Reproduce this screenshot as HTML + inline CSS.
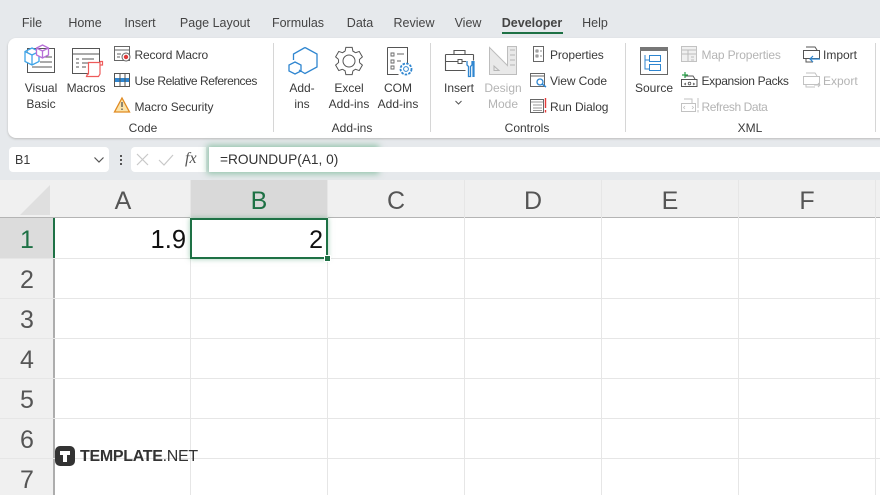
<!DOCTYPE html>
<html><head><meta charset="utf-8"><style>
html,body{margin:0;padding:0}
body{width:880px;height:495px;overflow:hidden;background:#fff;position:relative;font-family:"Liberation Sans",sans-serif;color:#333}
.a{position:absolute}
.t{position:absolute;white-space:nowrap;font-size:12px;line-height:16px;color:#3a3a3a}
.c{transform:translateX(-50%);text-align:center}
.d{color:#b4b4b4}
.tab{position:absolute;top:15px;font-size:12.5px;line-height:16px;color:#444;white-space:nowrap;transform:translateX(-50%)}
.h{position:absolute;top:186px;font-size:25px;line-height:30px;color:#555;transform:translateX(-50%)}
.r{position:absolute;left:27px;font-size:25px;line-height:30px;color:#555;transform:translateX(-50%)}
</style></head><body>
<div class="a" style="left:0;top:0;width:880px;height:180px;background:#e6e9ec"></div>
<div class="a" style="left:8px;top:38px;width:880px;height:100px;background:#fff;border-radius:8px;box-shadow:0 1px 2px #bbb"></div>

<span class="tab" style="left:32px">File</span>
<span class="tab" style="left:85px">Home</span>
<span class="tab" style="left:140px">Insert</span>
<span class="tab" style="left:215px">Page Layout</span>
<span class="tab" style="left:298px">Formulas</span>
<span class="tab" style="left:360px">Data</span>
<span class="tab" style="left:414px">Review</span>
<span class="tab" style="left:468px">View</span>
<span class="tab" style="left:532px;font-weight:bold;font-size:12.5px;color:#444">Developer</span>
<span class="tab" style="left:595px">Help</span>
<div class="a" style="left:502px;top:32px;width:61px;height:2px;background:#1e7145"></div>

<div class="a" style="left:273px;top:43px;width:1px;height:89px;background:#d6d6d6"></div>
<div class="a" style="left:430px;top:43px;width:1px;height:89px;background:#d6d6d6"></div>
<div class="a" style="left:625px;top:43px;width:1px;height:89px;background:#d6d6d6"></div>
<div class="a" style="left:875px;top:43px;width:1px;height:89px;background:#d6d6d6"></div>

<svg class="a" style="left:0;top:0" width="880" height="140" fill="none" stroke-width="1">
<!-- Visual Basic -->
<g stroke="#555"><rect x="27.500" y="48.500" width="27" height="24" fill="#fff"/><path d="M40 57h12M40 62h12M32 67h20"/></g>
<path d="M32 48l7 3.500v10l-7 3.500-7-3.500v-10zM25 51.500l7 3.500 7-3.500M32 55v10" stroke="#3fa4e8" fill="#fff" stroke-width="1.300"/>
<path d="M42.500 45l6 3v7l-6 3-6-3v-7zM36.500 48l6 3 6-3M42.500 51v7" stroke="#b76fd8" fill="#fff" stroke-width="1.300"/>
<!-- Macros -->
<g stroke="#555"><rect x="72.500" y="48.500" width="27" height="25" fill="#fff"/><path d="M73 54h26M76 59h3M82 59h12M76 63h3M82 63h6M76 67h3M82 67h4"/></g>
<path d="M88.500 62.500h11.500v11.500l-1.500 2.500h-12l1-2.500h1zM100 61.500h2.500v3.500h-2.500" stroke="#ee5a5a" fill="#fff" stroke-width="1.200"/>
<!-- Record Macro -->
<rect x="114.500" y="46.500" width="15" height="14" stroke="#666" fill="#fff"/><path d="M115 50h14M117 54h4M117 57h3" stroke="#666"/>
<circle cx="126" cy="57" r="4" fill="#fff" stroke="#666"/><circle cx="126" cy="57" r="2.200" fill="#e03a3a"/>
<!-- Relative refs -->
<rect x="114.500" y="73.500" width="15" height="13" fill="#fff" stroke="#555"/><rect x="115" y="78" width="14" height="4" fill="#2f86d0"/><path d="M120 74v12M125 74v12" stroke="#555"/>
<!-- Security -->
<path d="M122 98l7.500 14h-15z" fill="#fbe3a8" stroke="#e08a22" stroke-width="1.300"/><path d="M122 102v5M122 108.500v1.500" stroke="#555" stroke-width="1.300"/>
<!-- Add-ins -->
<path d="M305 47.500l12 6.500v13l-12 6.500-6-3.500M293.500 60v-6l11.500-6.500" stroke="#2f86d0" stroke-width="1.300"/>
<path d="M295 62l6 3v6l-6 3-6-3v-6z" stroke="#2f86d0" stroke-width="1.300"/>
<!-- Excel add-ins gear -->
<g transform="translate(349 61)" stroke="#555">
<path d="M-3.930-9.740L-3.150-13.640L3.150-13.640L3.930-9.740A10.500 10.500 0 0 1 6.460-8.270"/>
<path transform="rotate(60)" d="M-3.930-9.740L-3.150-13.640L3.150-13.640L3.930-9.740A10.500 10.500 0 0 1 6.460-8.270"/>
<path transform="rotate(120)" d="M-3.930-9.740L-3.150-13.640L3.150-13.640L3.930-9.740A10.500 10.500 0 0 1 6.460-8.270"/>
<path transform="rotate(180)" d="M-3.930-9.740L-3.150-13.640L3.150-13.640L3.930-9.740A10.500 10.500 0 0 1 6.460-8.270"/>
<path transform="rotate(240)" d="M-3.930-9.740L-3.150-13.640L3.150-13.640L3.930-9.740A10.500 10.500 0 0 1 6.460-8.270"/>
<path transform="rotate(300)" d="M-3.930-9.740L-3.150-13.640L3.150-13.640L3.930-9.740A10.500 10.500 0 0 1 6.460-8.270"/>
<circle r="6"/></g>
<!-- COM -->
<path d="M387.500 47.500h20v16M387.500 47.500v27h11" stroke="#555"/><path d="M391 53h3v3h-3zM391 60h3v3h-3zM391 66h3v3h-3zM397 54h7M397 61h4" stroke="#666" stroke-width=".9"/>
<circle cx="406" cy="69" r="5.500" stroke="#2f86d0" stroke-width="1.800" stroke-dasharray="2.500 1.200"/><circle cx="406" cy="69" r="2.400" stroke="#2f86d0"/>
<!-- Insert -->
<path d="M445.500 54.500h28M445.500 54.500v16h20M473.500 54.500v6M446 61.500h20M454 54v-3.500h11v3.500" stroke="#555" stroke-width="1.100"/><rect x="458" y="59.500" width="4" height="4" stroke="#555" fill="#fff"/>
<path d="M467 61v4l1.500 1.500v10h2v-10l1.500-1.500v-4" stroke="#2f86d0" stroke-width="1.300"/><path d="M473.500 61v16" stroke="#2f86d0" stroke-width="2.200"/>
<!-- Design mode -->
<path d="M489.500 47.500v27h27v-28h-9v19z" stroke="#bdbdbd" fill="#e9e9e9"/><path d="M494 66v4.500h5zM510 50h5M510 55h5M510 60h5M510 65h5" stroke="#b5b5b5"/>
<!-- Properties -->
<rect x="533.500" y="46.500" width="10" height="15" stroke="#666"/><path d="M536 50h2v2h-2zM536 55h2v2h-2zM540 51h2M540 56h2" stroke="#666" stroke-width=".8"/>
<!-- View code -->
<rect x="530.500" y="73.500" width="14" height="13" stroke="#666"/><path d="M531 76h14" stroke="#666"/><circle cx="540" cy="82" r="3" stroke="#2f86d0" stroke-width="1.300"/><path d="M542 84l4 3" stroke="#2f86d0" stroke-width="1.500"/>
<!-- Run dialog -->
<rect x="530.500" y="99.500" width="13" height="13" stroke="#666"/><path d="M531 102h13M533 105h9M533 108h9M533 110.500h9" stroke="#777" stroke-width=".8"/><path d="M545.500 98v10M545.500 110v2.500" stroke="#e63a3a" stroke-width="1.400"/>
<!-- Source -->
<rect x="640.500" y="47.500" width="27" height="27" stroke="#666" fill="#fff"/><rect x="640" y="47" width="28" height="4" fill="#777"/>
<path d="M645 55v14h4M645 60h4" stroke="#2f86d0"/><rect x="649.500" y="55.500" width="11" height="6" stroke="#2f86d0"/><rect x="649.500" y="64.500" width="11" height="6" stroke="#2f86d0"/>
<!-- Map props -->
<rect x="681.500" y="46.500" width="15" height="15" stroke="#c2c2c2" fill="#f0f0f0"/><path d="M682 50h14M682 54h14M688 50v11M691 57h3M691 60h3" stroke="#bcbcbc"/>
<!-- Expansion packs -->
<path d="M685 76h8l2 3M681.500 79.500h15.500v7h-15.500z" stroke="#555" fill="#fff"/><path d="M686 83l-1.500 1 1.500 1M693 83l1.500 1-1.500 1" stroke="#555" stroke-width=".8"/><circle cx="689.500" cy="83.500" r="1.300" stroke="#555" stroke-width=".8"/><path d="M685 72v6M682 75h6" stroke="#2aa04a" stroke-width="1.200"/>
<!-- Refresh -->
<path d="M684 99h8v4M681.500 103.500h14v8h-14zM698 98v10M698 110v2.500" stroke="#c2c2c2"/><path d="M685 106l-1.500 1.500 1.500 1.500M692 106l1.500 1.500-1.500 1.500" stroke="#c2c2c2" stroke-width=".8"/>
<!-- Import -->
<path d="M806 47h9l2 3M803.500 50.500h16v8h-16zM806 59v3h7" stroke="#555"/><path d="M820 59h-10M813 56l-3 3 3 3" stroke="#2f86d0" stroke-width="1.200"/>
<!-- Export -->
<path d="M806 73h9l2 3M803.500 76.500h16v8h-16zM806 85v2h9M814 85h6M818 83l2 2-2 2" stroke="#c2c2c2"/>
</svg>

<span class="t c" style="left:41px;top:80px">Visual</span><span class="t c" style="left:41px;top:96px">Basic</span>
<span class="t c" style="left:86px;top:80px;letter-spacing:-.1px">Macros</span>
<span class="t" style="left:134.500px;top:47px;letter-spacing:-.15px">Record Macro</span>
<span class="t" style="left:134.500px;top:73px;letter-spacing:-.45px">Use Relative References</span>
<span class="t" style="left:134.500px;top:99px;letter-spacing:-.08px">Macro Security</span>
<span class="t c" style="left:143px;top:120px">Code</span>
<span class="t c" style="left:302px;top:80px">Add-</span><span class="t c" style="left:302px;top:96px">ins</span>
<span class="t c" style="left:349px;top:80px">Excel</span><span class="t c" style="left:349px;top:96px">Add-ins</span>
<span class="t c" style="left:398px;top:80px">COM</span><span class="t c" style="left:398px;top:96px">Add-ins</span>
<span class="t c" style="left:352px;top:120px">Add-ins</span>
<span class="t c" style="left:459px;top:80px">Insert</span>
<svg class="a" style="left:454px;top:100px" width="10" height="6" fill="none"><path d="M1.500 1l3 3 3-3" stroke="#555"/></svg>
<span class="t c d" style="left:503px;top:80px">Design</span><span class="t c d" style="left:503px;top:96px">Mode</span>
<span class="t" style="left:550px;top:47px;letter-spacing:-.1px">Properties</span>
<span class="t" style="left:550px;top:73px;letter-spacing:-.1px">View Code</span>
<span class="t" style="left:550px;top:99px;letter-spacing:-.1px">Run Dialog</span>
<span class="t c" style="left:527px;top:120px">Controls</span>
<span class="t c" style="left:654px;top:80px">Source</span>
<span class="t d" style="left:701.500px;top:47px;letter-spacing:-.15px">Map Properties</span>
<span class="t" style="left:701.500px;top:73px;letter-spacing:-.33px">Expansion Packs</span>
<span class="t d" style="left:701.500px;top:99px;letter-spacing:-.4px">Refresh Data</span>
<span class="t c" style="left:750px;top:120px">XML</span>
<span class="t" style="left:823px;top:47px">Import</span>
<span class="t d" style="left:823px;top:73px">Export</span>

<!-- Formula bar -->
<div class="a" style="left:9px;top:147px;width:100px;height:25px;background:#fff;border-radius:4px"></div>
<span class="t" style="left:15px;top:152px;font-size:12.5px">B1</span>
<svg class="a" style="left:93px;top:156px" width="12" height="8" fill="none"><path d="M1.500 1.500l4.500 4.500 4.500-4.500" stroke="#555" stroke-width="1.200"/></svg>
<div class="a" style="left:119.500px;top:155px;width:2px;height:2px;background:#555;box-shadow:0 4px #555,0 8px #555"></div>
<div class="a" style="left:131px;top:147px;width:75px;height:25px;background:#fff;border-radius:4px 0 0 4px"></div>
<svg class="a" style="left:136px;top:152px" width="40" height="16" fill="none"><path d="M1 2l11 11M12 2L1 13" stroke="#c8c8c8" stroke-width="1.200"/><path d="M23 8l5 5 9-10" stroke="#c8c8c8" stroke-width="1.200"/></svg>
<span class="a" style="left:185px;top:150px;font:italic 16px/18px 'Liberation Serif',serif;color:#555">fx</span>
<div class="a" style="left:209px;top:147px;width:168px;height:25px;background:#fff;box-shadow:0 0 6px 2px rgba(70,160,110,.5)"></div>
<div class="a" style="left:377px;top:147px;width:503px;height:25px;background:#fff"></div>
<span class="t" style="left:220px;top:152px;font-size:13.700px;color:#333">=ROUNDUP(A1, 0)</span>

<!-- Grid -->
<div class="a" style="left:0;top:180px;width:880px;height:38px;background:#f0f0f0;border-bottom:1.500px solid #b4b4b4;box-sizing:border-box"></div>
<div class="a" style="left:0;top:218px;width:53px;height:277px;background:#f0f0f0"></div>
<div class="a" style="left:0;top:218px;width:53px;height:40px;background:#dcdcdc"></div>
<div class="a" style="left:190px;top:180px;width:137px;height:38px;background:#d9d9d9"></div>
<div class="a" style="left:53px;top:218px;width:1.500px;height:277px;background:#adadad"></div>
<div class="a" style="left:53px;top:218px;width:2px;height:40px;background:#1e7145"></div>
<svg class="a" style="left:19px;top:184px" width="32" height="32"><path d="M1 31L31 1v30z" fill="#dfdfdf"/></svg>

<svg class="a" style="left:0;top:180px" width="880" height="315">
<g stroke="#e6e6e6" stroke-width="1"><path d="M190.500 0v315M327.500 0v315M464.500 0v315M601.500 0v315M738.500 0v315M875.500 0v315"/>
<path d="M0 78.500h880M0 118.500h880M0 158.500h880M0 198.500h880M0 238.500h880M0 278.500h880"/></g>
</svg>

<span class="h" style="left:123px">A</span>
<span class="h" style="left:259px;color:#1e7145">B</span>
<span class="h" style="left:396px">C</span>
<span class="h" style="left:533px">D</span>
<span class="h" style="left:670px">E</span>
<span class="h" style="left:807px">F</span>
<span class="r" style="top:225px;color:#1e7145">1</span>
<span class="r" style="top:265px">2</span>
<span class="r" style="top:305px">3</span>
<span class="r" style="top:345px">4</span>
<span class="r" style="top:385px">5</span>
<span class="r" style="top:425px">6</span>
<span class="r" style="top:465px">7</span>

<span class="a" style="right:694px;top:225px;font-size:25.500px;line-height:30px;color:#111">1.9</span>
<div class="a" style="left:190px;top:218px;width:138px;height:41px;border:2px solid #1e7145;box-sizing:border-box;background:#fff;box-shadow:0 0 5px rgba(70,160,110,.5)"></div>
<span class="a" style="right:557px;top:225px;font-size:25px;line-height:30px;color:#111">2</span>
<div class="a" style="left:325px;top:256px;width:5px;height:5px;background:#1e7145;border:1px solid #fff;box-sizing:content-box;margin:-1px"></div>

<!-- Logo -->
<div class="a" style="left:55px;top:446px;width:20px;height:20px;background:#333;border-radius:5px"></div>
<div class="a" style="left:60px;top:451px;width:10px;height:3.500px;background:#fff"></div>
<div class="a" style="left:63px;top:451px;width:4px;height:11px;background:#fff"></div>
<span class="t" style="left:80px;top:447px;font-size:16px;line-height:20px;color:#333;letter-spacing:-.3px"><b>TEMPLATE</b>.NET</span>
</body></html>
